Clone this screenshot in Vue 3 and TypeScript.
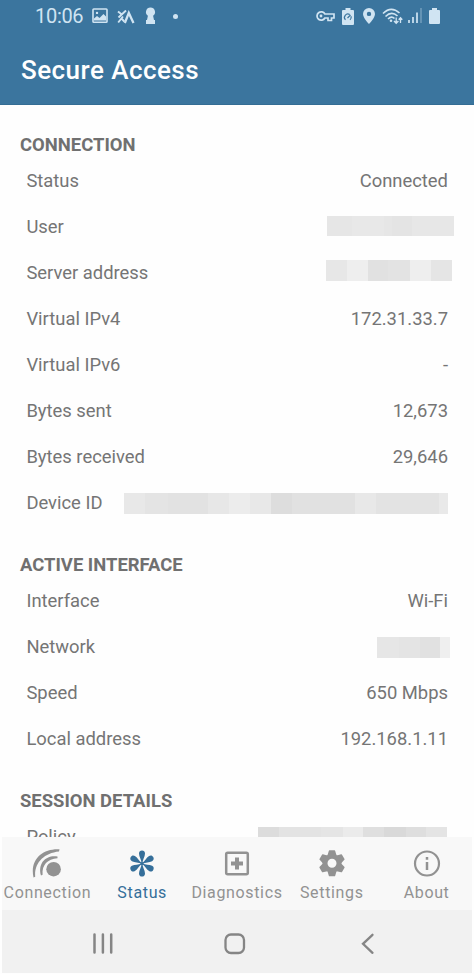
<script setup lang="ts">
interface Segment { w: number; c: string }
interface Row { label: string; value?: string; mask?: Segment[]; kind?: string }
interface Section { title: string; rows: Row[] }

const seg = (...parts: [number, string][]): Segment[] => parts.map(([w, c]) => ({ w, c }))

const sections: Section[] = [
  {
    title: 'CONNECTION',
    rows: [
      { label: 'Status', value: 'Connected' },
      { label: 'User', kind: 'user', mask: seg([25, '#e6e6e6'], [32, '#e8e8e8'], [8, '#e6e6e6'], [20, '#e4e4e4'], [42, '#e7e7e7']) },
      { label: 'Server address', kind: 'server', mask: seg([21, '#e7e7e7'], [21, '#eeeeee'], [20, '#e1e1e1'], [22, '#e3e3e3'], [21, '#eeeeee'], [21, '#e5e5e5']) },
      { label: 'Virtual IPv4', value: '172.31.33.7' },
      { label: 'Virtual IPv6', value: '-' },
      { label: 'Bytes sent', value: '12,673' },
      { label: 'Bytes received', value: '29,646' },
      { label: 'Device ID', kind: 'device', mask: seg([21, '#e8e8e8'], [23, '#e4e4e4'], [40, '#e2e2e2'], [21, '#e7e7e7'], [21, '#ececec'], [21, '#e8e8e8'], [21, '#dddddd'], [63, '#e1e1e1'], [21, '#e8e8e8'], [63, '#e3e3e3'], [9, '#e9e9e9']) }
    ]
  },
  {
    title: 'ACTIVE INTERFACE',
    rows: [
      { label: 'Interface', value: 'Wi-Fi' },
      { label: 'Network', kind: 'network', mask: seg([22, '#e6e6e6'], [21, '#e4e4e4'], [20, '#e1e1e1'], [10, '#efefef']) },
      { label: 'Speed', value: '650 Mbps' },
      { label: 'Local address', value: '192.168.1.11' }
    ]
  },
  {
    title: 'SESSION DETAILS',
    rows: [
      { label: 'Policy', kind: 'policy', mask: seg([21, '#dcdcdc'], [42, '#e3e3e3'], [22, '#e5e5e5'], [20, '#ebebeb'], [21, '#dfdfdf'], [22, '#d9d9d9'], [20, '#dedede'], [21, '#e4e4e4']) }
    ]
  }
]

const petals: number[] = [0, 60, 120, 180, 240, 300]
const teeth: number[] = [0, 60, 120, 180, 240, 300]
</script>

<template>
  <div class="screen">
    <header class="top">
      <div class="statusbar">
        <div class="left">
          <span class="clock">10:06</span>
          <svg class="pic" width="16" height="16" viewBox="0 0 16 16">
            <rect x="1" y="1" width="14" height="13.2" rx=".8" fill="none" stroke="currentColor" stroke-width="1.6" />
            <path d="M2 12.5V10.5L5 8l2.500 2L11.500 6 14 8.500v4z" fill="currentColor" />
            <circle cx="5" cy="4.900" r="1.200" fill="currentColor" />
          </svg>
          <svg class="ya" width="18" height="14" viewBox="0 0 18 14">
            <path d="M1 1.500l4.200 3.300M9 .5L1.500 7.500M1.200 12.500L6 6.500M5 9l2.300 2.500" fill="none" stroke="currentColor" stroke-width="1.900" />
            <path d="M7.800 13L11.800 3l4.700 10" fill="none" stroke="currentColor" stroke-width="2.300" />
          </svg>
          <svg class="keyhole" width="11" height="18" viewBox="0 0 11 18">
            <path d="M5.500.5a4.500 4.500 0 0 1 2.600 8.200L9 13h1v4H1v-4h1l.9-4.300A4.500 4.500 0 0 1 5.500.5z" fill="currentColor" />
          </svg>
          <span class="dot"></span>
        </div>
        <div class="right">
          <svg width="19" height="12" viewBox="0 0 19 12">
            <path d="M8.900 4A4.200 4.200 0 1 0 8.900 8H12v2.500h3.500V8H18V4z" fill="none" stroke="currentColor" stroke-width="1.700" />
            <circle cx="5" cy="6" r="1.400" fill="currentColor" />
          </svg>
          <svg class="saver" width="12" height="17" viewBox="0 0 12 17">
            <path d="M3.500 0h5v2H11q1 0 1 1v13q0 1-1 1H1q-1 0-1-1V3q0-1 1-1h2.500z" fill="currentColor" />
            <path d="M3.500 11.800a3.400 3.400 0 0 1 4.200-5.300M9 8.200a3.300 3.300 0 0 1-1 3.700M5.500 10L8.500 7" fill="none" stroke="#3a759e" stroke-width="1.200" />
          </svg>
          <svg class="pin" width="12" height="16" viewBox="0 0 12 16">
            <path fill-rule="evenodd" d="M6 0a6 6 0 0 1 6 6c0 4-6 10-6 10S0 10 0 6a6 6 0 0 1 6-6zm0 3.700a2.200 2.200 0 1 0 0 4.400 2.200 2.200 0 0 0 0-4.400z" fill="currentColor" />
          </svg>
          <svg class="wifi" width="21" height="17" viewBox="0 0 21 17">
            <path d="M1 5.500Q9 -2.500 17.500 5M3.500 8.500Q9.500 2.500 15.500 8M6 11Q9.500 7.500 12.500 10.500" fill="none" stroke="currentColor" stroke-width="1.600" />
            <circle cx="9" cy="12.700" r="1.300" fill="currentColor" />
            <path d="M14.200 9.500v5.500M12 13l2.200 2.300L16.400 13M18.500 15V10M16.700 11.800l1.800-2 1.800 2" fill="none" stroke="currentColor" stroke-width="1.300" />
          </svg>
          <svg class="signal" width="14" height="16" viewBox="0 0 14 16">
            <path d="M1 12v3M5 9v6M9 4.500V15" stroke="currentColor" stroke-width="1.700" />
            <path d="M13 0v15" stroke="currentColor" stroke-width="1.400" opacity=".4" />
          </svg>
          <svg class="battery" width="11" height="16" viewBox="0 0 11 16">
            <path d="M3 0h5v2h2q1 0 1 1v12q0 1-1 1H1q-1 0-1-1V3q0-1 1-1h2z" fill="currentColor" />
          </svg>
        </div>
      </div>
      <h1>Secure Access</h1>
    </header>

    <main>
      <section v-for="s in sections" :key="s.title">
        <h2>{{ s.title }}</h2>
        <div v-for="r in s.rows" :key="r.label" class="row">
          <span class="label">{{ r.label }}</span>
          <span v-if="r.value" class="value">{{ r.value }}</span>
          <div v-else class="mask" :class="r.kind">
            <i v-for="(m, i) in r.mask" :key="i" :style="{ width: m.w + 'px', background: m.c }"></i>
          </div>
        </div>
      </section>
    </main>

    <nav class="tabs">
      <a class="tab">
        <svg width="32" height="30" viewBox="0 0 32 30">
          <path d="M28.500 1.200C12 .2-1.500 11 2.500 29.500l1.700-.7C3 15 13 5 28 3.500z" fill="currentColor" />
          <path d="M26.500 8.500C15 6.800 6.500 15 10 27.500l1.600-.8C10.800 17 16.500 11 26.500 10.300z" fill="currentColor" />
          <circle cx="22.600" cy="21.200" r="7.300" fill="currentColor" />
        </svg>
        <span>Connection</span>
      </a>
      <a class="tab active">
        <svg width="32" height="30" viewBox="0 0 32 30">
          <g transform="translate(16 15.500)" fill="currentColor">
            <path v-for="a in petals" :key="a" d="M-.4 0C-.5-4-3-6.500-3-9.900C-3-11.900-1.800-13 0-13S3-11.900 3-9.900C3-6.500 .5-4 .4 0Z" :transform="`rotate(${a})`" />
            <circle r="1.500" />
          </g>
        </svg>
        <span>Status</span>
      </a>
      <a class="tab">
        <svg width="32" height="30" viewBox="0 0 32 30">
          <rect x="5.200" y="4.700" width="21.600" height="21.600" rx="1.500" fill="none" stroke="currentColor" stroke-width="2.500" />
          <path d="M16 9.500v12M10 15.500h12" stroke="currentColor" stroke-width="4" />
        </svg>
        <span>Diagnostics</span>
      </a>
      <a class="tab">
        <svg width="32" height="30" viewBox="0 0 32 30">
          <g transform="translate(16 15.300)" fill="currentColor">
            <path v-for="a in teeth" :key="a" d="M-4.500-8L-3.200-12.400Q-3.100-13-2.500-13H2.500Q3.100-13 3.200-12.400L4.500-8Z" :transform="`rotate(${a})`" />
            <circle r="7" fill="none" stroke="currentColor" stroke-width="5" />
          </g>
        </svg>
        <span>Settings</span>
      </a>
      <a class="tab">
        <svg width="32" height="30" viewBox="0 0 32 30">
          <circle cx="16" cy="15.500" r="12" fill="none" stroke="currentColor" stroke-width="2.200" />
          <path d="M16 14v8M16 9v2.700" stroke="currentColor" stroke-width="2.500" />
        </svg>
        <span>About</span>
      </a>
    </nav>

    <footer class="system">
      <svg width="20" height="22" viewBox="0 0 20 22"><path d="M1.500 1.500v18M9.900 1.500v18M18.200 1.500v18" stroke="currentColor" stroke-width="2.500" stroke-linecap="round" /></svg>
      <svg class="home" width="22" height="22" viewBox="0 0 22 22"><rect x="1.500" y="1.500" width="18.500" height="18.500" rx="5.500" fill="none" stroke="currentColor" stroke-width="2.300" /></svg>
      <svg class="back" width="14" height="22" viewBox="0 0 14 22"><path d="M11.500 1.800L2 10.800l9.500 9" fill="none" stroke="currentColor" stroke-width="2.300" stroke-linecap="round" /></svg>
    </footer>
  </div>
</template>

<style>
body { margin: 0; background: #fefefe; }
</style>

<style scoped>
.screen { width: 474px; height: 974px; display: flex; flex-direction: column; overflow: hidden; background: #fefefe; font-family: Roboto, "Liberation Sans", sans-serif; color: #757575; }
.top { flex: none; height: 105px; box-sizing: border-box; background: #3b759e; color: #fff; border-bottom: 1px solid #346d94; }
.statusbar { height: 34px; display: flex; justify-content: space-between; padding: 0 34px 0 35px; color: #d0e4f2; }
.left, .right { display: flex; align-items: center; height: 32px; }
.clock { font-size: 20px; line-height: 32px; width: 57px; letter-spacing: -.3px; }
.ya { margin-left: 9px; margin-top: 1px; }
.keyhole { margin-left: 10px; }
.dot { width: 5px; height: 5px; border-radius: 50%; background: #d0e4f2; margin-left: 17px; }
.saver { margin-left: 7px; }
.pin { margin-left: 9px; }
.wifi { margin-left: 7px; }
.signal { margin-left: 5px; }
.battery { margin-left: 7px; }
h1 { margin: 0; padding-left: 21px; font-size: 26px; font-weight: 500; line-height: 72px; letter-spacing: .45px; }
main { flex: none; height: 732px; box-sizing: border-box; padding: 27px 26px 0; overflow: hidden; }
section { margin-bottom: 26px; }
h2 { margin: 0 0 0 -6px; font-size: 18.45px; font-weight: 700; line-height: 26px; height: 26px; color: #707070; }
.row { display: flex; align-items: center; justify-content: space-between; height: 46px; font-size: 18.4px; line-height: 46px; white-space: nowrap; }
.label { padding-left: .4px; }
.mask { display: flex; height: 21px; }
.mask i { display: block; }
.user { height: 20px; margin-right: -6px; margin-bottom: 2px; }
.server { margin-right: -4px; margin-bottom: 5px; }
.network { margin-right: -2px; }
.policy { margin-right: 1px; }
.tabs { flex: none; height: 73px; display: grid; grid-template-columns: repeat(5, 1fr); background: #f8f8f8; color: #929292; box-shadow: inset 2px 0 #fefefe, inset -2px 0 #fefefe; }
.tab { display: flex; flex-direction: column; align-items: center; padding-top: 11px; font-size: 16px; letter-spacing: .65px; }
.tab span { line-height: 20px; margin-top: 5px; }
.active { color: #356f9a; }
.system { flex: none; height: 63px; margin: 0 2px; background: #f1f1f1; color: #858585; display: flex; align-items: center; padding-left: 91px; box-sizing: border-box; padding-top: 4px; }
.home { margin-left: 111px; }
.back { margin-left: 115px; }
</style>
